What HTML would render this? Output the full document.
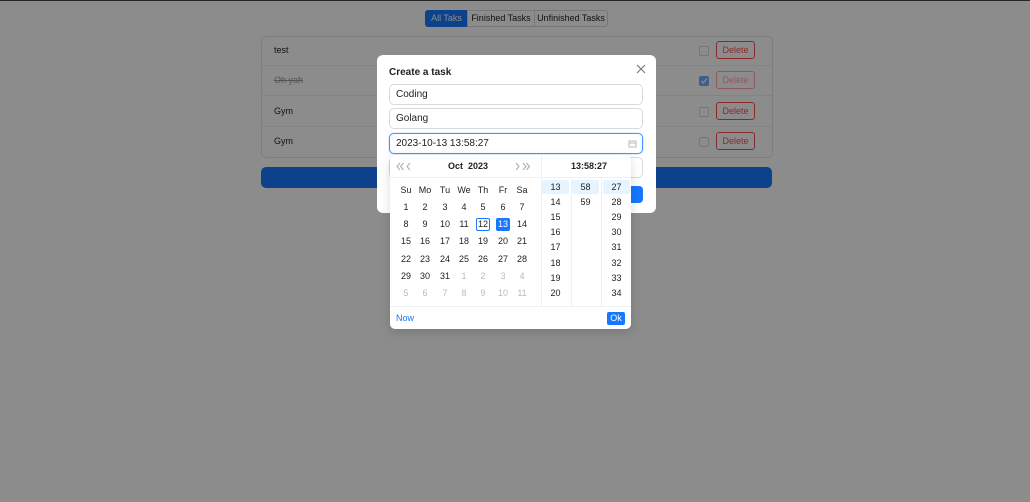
<!DOCTYPE html><html><head><style>
*{box-sizing:border-box;margin:0;padding:0}
body{width:1030px;height:502px;position:relative;background:#fff;font-family:"Liberation Sans",sans-serif;font-size:9px;color:#222;overflow:hidden}
.a{position:absolute}
.tab{position:absolute;top:10px;height:17px;border:1px solid #d9d9d9;line-height:15px;text-align:center;font-size:9px;background:#fff}
.row{position:absolute;left:261px;width:511px;height:30px;border-bottom:1px solid #eee}
.row span{position:absolute;left:13px;top:9px;font-size:9px}
.cb{position:absolute;left:438px;top:10px;width:10px;height:10px;border:1px solid #d9d9d9;border-radius:2px;background:#fff}
.del{position:absolute;left:455px;top:5px;width:39px;height:18px;border:1px solid #ff4d4f;border-radius:3px;color:#ff4d4f;text-align:center;line-height:16px;font-size:9px;background:#fff}
.mask{position:absolute;inset:0;background:rgba(0,0,0,.45)}
.inp{position:absolute;left:389px;width:254px;height:21px;border:1px solid #d9d9d9;border-radius:5px;background:#fff;padding-left:6px;line-height:19px;font-size:10px}
.d{position:absolute;width:14px;height:13px;text-align:center;line-height:13px;font-size:9px}
.t{position:absolute;width:27px;height:14px;text-align:center;line-height:14px;font-size:9px}
</style></head><body>
<div class="a" style="left:0;top:0;width:1030px;height:1px;background:#444"></div>
<div class="tab" style="left:425px;width:43px;background:#1677ff;color:#fff;border-color:#1677ff;border-radius:3px 0 0 3px">All Taks</div>
<div class="tab" style="left:467px;width:68px">Finished Tasks</div>
<div class="tab" style="left:534px;width:74px;border-radius:0 3px 3px 0">Unfinished Tasks</div>
<div class="a" style="left:261px;top:36px;width:512px;height:122px;border:1px solid #e5e5e5;border-radius:5px"></div>
<div class="row" style="top:36px"><span>test</span><div class="cb"></div><div class="del">Delete</div></div>
<div class="row" style="top:66px"><span style="text-decoration:line-through;color:#999">Oh yah</span><div class="cb" style="background:#1677ff;border-color:#1677ff;opacity:.6"><svg width="8" height="8" style="position:absolute;left:0;top:0"><path d="M1.5 4L3.3 6L6.8 1.8" stroke="#fff" stroke-width="1.2" fill="none"/></svg></div><div class="del" style="opacity:.5">Delete</div></div>
<div class="row" style="top:97px"><span>Gym</span><div class="cb"></div><div class="del">Delete</div></div>
<div class="row" style="top:127px;border:none"><span>Gym</span><div class="cb"></div><div class="del">Delete</div></div>
<div class="a" style="left:261px;top:167px;width:511px;height:21px;background:#1677ff;border-radius:5px"></div>
<div class="mask"></div>
<div class="a" style="left:377px;top:55px;width:279px;height:158px;background:#fff;border-radius:6px"></div>
<div class="a" style="left:389px;top:67px;font-size:10px;font-weight:bold;color:#222">Create a task</div>
<svg class="a" style="left:636px;top:64px" width="10" height="10"><path d="M1 1L9 9M9 1L1 9" stroke="#777" stroke-width="1.1"/></svg>
<div class="inp" style="top:84px">Coding</div>
<div class="inp" style="top:108px">Golang</div>
<div class="inp" style="top:133px;border-color:#4096ff;box-shadow:0 0 0 1px rgba(5,145,255,.12)">2023-10-13 13:58:27</div>
<svg class="a" style="left:628px;top:139px" width="9" height="9"><rect x="1" y="2" width="7" height="6" fill="none" stroke="#bbb"/><path d="M1 4H8" stroke="#bbb"/></svg>
<div class="inp" style="top:157px"></div>
<div class="a" style="left:610px;top:186px;width:33px;height:17px;background:#1677ff;border-radius:4px"></div>
<div class="a" style="left:390px;top:155px;width:241px;height:174px;background:#fff;border-radius:5px;box-shadow:0 3px 10px rgba(0,0,0,.15)"></div>
<div class="a" style="left:390px;top:177px;width:151px;height:1px;background:#f0f0f0"></div>
<div class="a" style="left:541px;top:155px;width:1px;height:151px;background:#f0f0f0"></div>
<div class="a" style="left:541px;top:177px;width:90px;height:1px;background:#f0f0f0"></div>
<div class="a" style="left:571px;top:178px;width:1px;height:128px;background:#f0f0f0"></div>
<div class="a" style="left:601px;top:178px;width:1px;height:128px;background:#f0f0f0"></div>
<div class="a" style="left:390px;top:306px;width:241px;height:1px;background:#f0f0f0"></div>
<svg class="a" style="left:396px;top:162px" width="20" height="9"><path d="M4 1L1 4.5L4 8M7.5 1L4.5 4.5L7.5 8M14 1L11 4.5L14 8" stroke="#aaa" stroke-width="1" fill="none"/></svg>
<svg class="a" style="left:515px;top:162px" width="20" height="9"><path d="M1 1L4 4.5L1 8M8 1L11 4.5L8 8M11.5 1L14.5 4.5L11.5 8" stroke="#aaa" stroke-width="1" fill="none"/></svg>
<div class="a" style="left:448px;top:161px;font-weight:bold;font-size:9px">Oct&nbsp; 2023</div>
<div class="a" style="left:571px;top:161px;font-weight:bold;font-size:9px">13:58:27</div>
<div id="cal"></div>
<div class="a" style="left:396px;top:313px;color:#1677ff;font-size:9px">Now</div>
<div class="a" style="left:607px;top:312px;width:18px;height:13px;background:#1677ff;color:#fff;border-radius:2px;text-align:center;line-height:13px;font-size:9px">Ok</div>
<script>
var h='',xs=[406,425,445,464,483,503,522],w=['Su','Mo','Tu','We','Th','Fr','Sa'];
for(var i=0;i<7;i++)h+='<div class="d" style="left:'+(xs[i]-7)+'px;top:184px">'+w[i]+'</div>';
var days=[];for(i=1;i<=31;i++)days.push([i,0]);for(i=1;i<=11;i++)days.push([i,1]);
for(i=0;i<42;i++){var r=Math.floor(i/7),c=i%7,d=days[i],st='left:'+(xs[c]-7)+'px;top:'+(201+r*17.2)+'px;';
if(d[1])st+='color:#bbb;';if(!d[1]&&d[0]==12)st+='border:1px solid #1677ff;border-radius:2px;line-height:11px;';
if(!d[1]&&d[0]==13)st+='background:#1677ff;color:#fff;border-radius:2px;';
h+='<div class="d" style="'+st+'">'+d[0]+'</div>';}
function col(x,a){for(var k=0;k<a.length;k++)h+='<div class="t" style="left:'+x+'px;top:'+(180+k*15.1)+'px;'+(k==0?'background:#e6f4ff;border-radius:2px;':'')+'">'+a[k]+'</div>';}
col(542,[13,14,15,16,17,18,19,20]);col(572,[58,59]);col(603,[27,28,29,30,31,32,33,34]);
document.getElementById('cal').innerHTML=h;
</script>
</body></html>
